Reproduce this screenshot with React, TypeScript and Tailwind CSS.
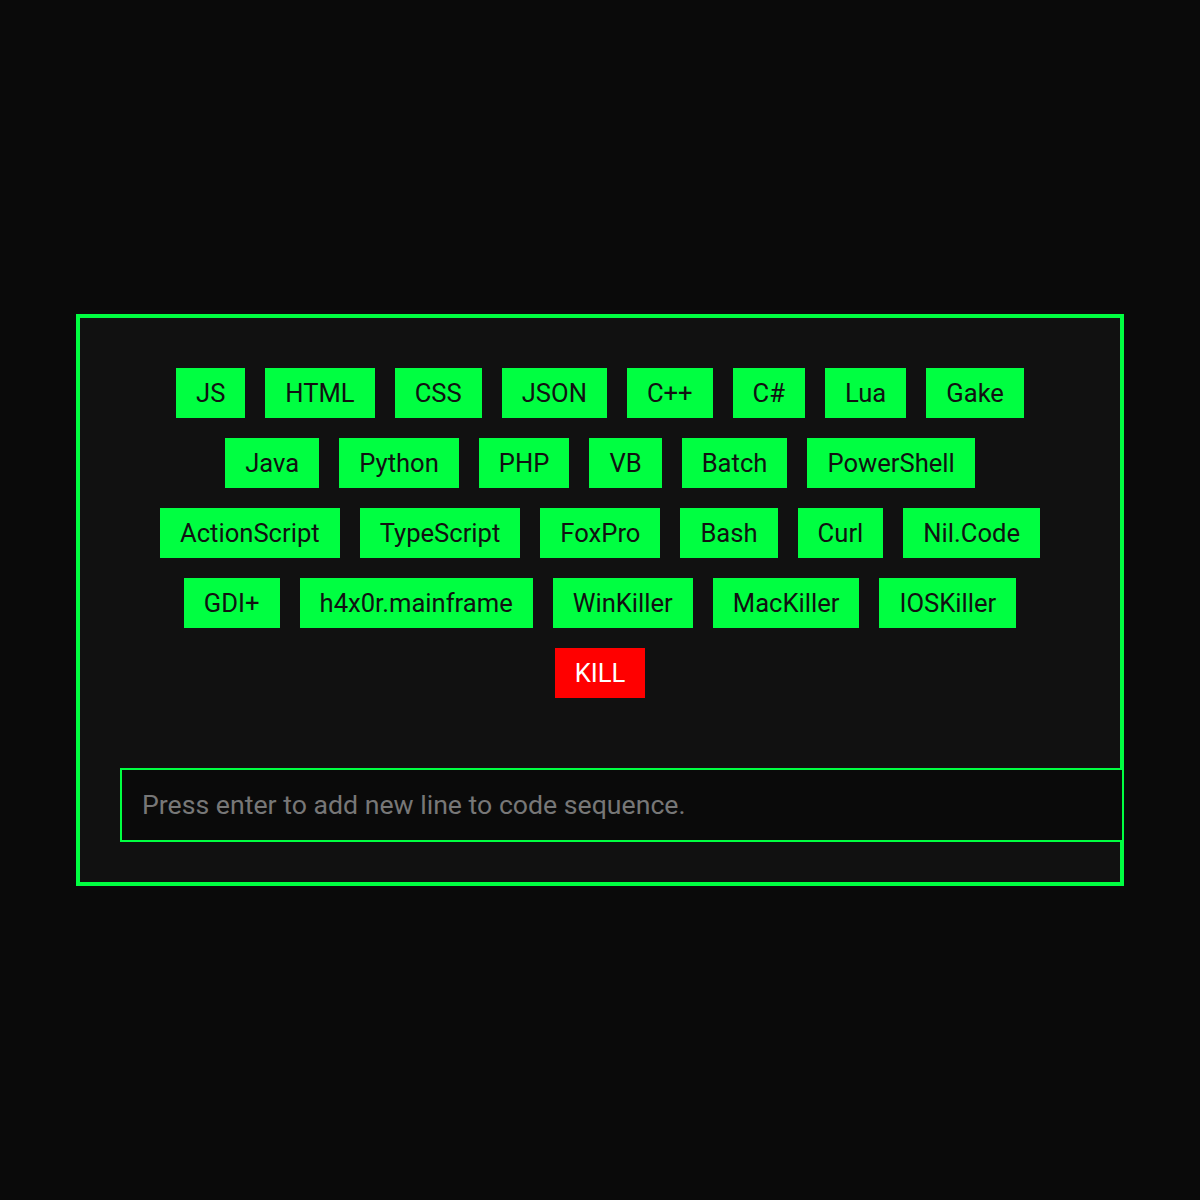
import React from "react";

const langs = [
  "JS","HTML","CSS","JSON","C++","C#","Lua","Gake",
  "Java","Python","PHP","VB","Batch","PowerShell",
  "ActionScript","TypeScript","FoxPro","Bash","Curl","Nil.Code",
  "GDI+","h4x0r.mainframe","WinKiller","MacKiller","IOSKiller",
];

export default function App() {
  return (
    <div
      className="min-h-screen w-full bg-[#0a0a0a] flex items-center justify-center"
      style={{ fontFamily: "Roboto, 'Liberation Sans', sans-serif" }}
    >
      <div className="w-[1048px] border-4 border-[#00ff41] bg-[#111111] p-10">
        <div className="flex flex-wrap justify-center">
          {langs.map((l) => (
            <button
              key={l}
              className="m-[10px] h-[50px] px-5 bg-[#00ff41] text-[#111111] text-[25.6px] leading-[30px]"
            >
              {l}
            </button>
          ))}
        </div>
        <div className="flex justify-center">
          <button className="m-[10px] h-[50px] px-5 bg-[#ff0000] text-white text-[25.6px] leading-[30px]">
            KILL
          </button>
        </div>
        <div className="mt-[60px] w-[1004px]">
          <input
            className="block w-[1004px] h-[74px] border-2 border-[#00ff41] bg-[#0a0a0a] px-5 text-[26.67px] text-[#aaaaaa] placeholder:text-[#777777] outline-none"
            placeholder="Press enter to add new line to code sequence."
          />
        </div>
      </div>
    </div>
  );
}
